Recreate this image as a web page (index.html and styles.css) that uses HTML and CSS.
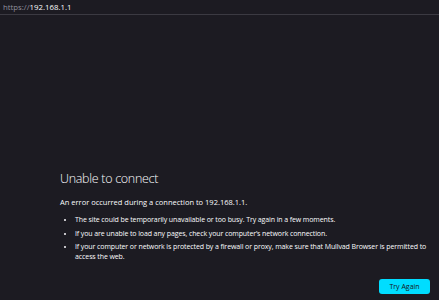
FILE: index.html
```html
<!DOCTYPE html>
<html>
<head>
<meta charset="utf-8">
<link rel="stylesheet" href="styles.css">
</head>
<body>
<div class="urlbar"><span class="scheme">https://</span><span class="host">192.168.1.1</span></div>
<main class="page">
  <div class="container">
    <h1 class="title">Unable to connect</h1>
    <p class="desc">An error occurred during a connection to 192.168.1.1.</p>
    <ul class="list">
      <li>The site could be temporarily unavailable or too busy. Try again in a few moments.</li>
      <li>If you are unable to load any pages, check your computer’s network connection.</li>
      <li>If your computer or network is protected by a firewall or proxy, make sure that Mullvad Browser is permitted to access the web.</li>
    </ul>
    <div class="actions"><button class="btn">Try Again</button></div>
  </div>
</main>
</body>
</html>
```
FILE: styles.css
```css
html, body { margin: 0; padding: 0; }
body {
  background: #1c1b22;
  color: #fbfbfe;
  font-family: "Open Sans", "Noto Sans", sans-serif;
  width: 439px;
  height: 300px;
  overflow: hidden;
}
.urlbar {
  height: 14px;
  border-bottom: 1px solid #3b3a42;
  font-size: 7.8px;
  line-height: 14px;
  padding-left: 3px;
}
.scheme { color: #8f8f9d; }
.host { color: #fbfbfe; }
.page {
  padding: 154.6px 0 0 60px;
}
.container { width: 370px; }
.title {
  font-weight: 300;
  font-size: 12.5px;
  letter-spacing: -0.3px;
  line-height: 17px;
  margin: 0 0 10.2px 0;
}
.desc {
  font-size: 7.5px;
  line-height: 10px;
  margin: 0 0 8.5px 0;
}
.list {
  margin: 0;
  padding-left: 15px;
  font-size: 7px;
  letter-spacing: -0.1px;
  line-height: 10px;
}
.list li { margin-bottom: 3.5px; }
.list li:last-child { margin-bottom: 0; }
.actions {
  display: flex;
  justify-content: flex-end;
  margin-top: 16.5px;
}
.btn {
  background: #00ddff;
  color: #15141a;
  border: none;
  border-radius: 3px;
  font-family: "Open Sans", sans-serif;
  font-size: 7px;
  height: 15px;
  width: 51px;
  padding: 0;
}
```
